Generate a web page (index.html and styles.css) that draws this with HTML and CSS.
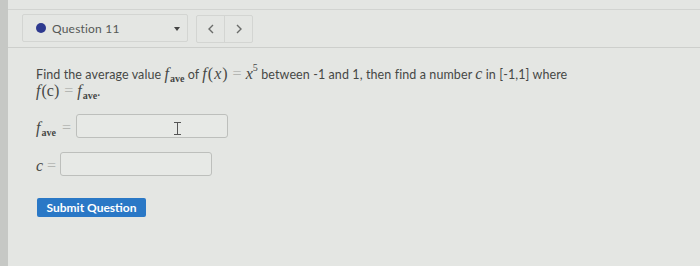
FILE: index.html
```html
<!DOCTYPE html>
<html>
<head>
<meta charset="utf-8">
<link rel="stylesheet" href="styles.css">
</head>
<body>
<div class="page">
  <div class="strip"></div>
  <div class="main">
    <div class="topbar">
      <div class="selector">
        <span class="dot"></span>
        <span class="qlabel">Question 11</span>
        <span class="caret"></span>
      </div>
      <div class="nav">
        <span class="navbtn"><svg width="8" height="10" viewBox="0 0 8 10"><path d="M6 1 L2 5 L6 9" fill="none" stroke="#6a6c6a" stroke-width="1.4"/></svg></span>
        <span class="navbtn"><svg width="8" height="10" viewBox="0 0 8 10"><path d="M2 1 L6 5 L2 9" fill="none" stroke="#6a6c6a" stroke-width="1.4"/></svg></span>
      </div>
    </div>
    <div class="content">
      <p class="question">Find the average value <span class="m">f</span><sub class="sub">ave</sub> of <span class="m">f</span><span class="mr">(</span><span class="m">x</span><span class="mr">)</span><span class="eq">=</span><span class="m">x</span><sup class="sup">5</sup> between -1 and 1, then find a number <span class="m">c</span> in [-1,1] where<br><span class="m">f</span><span class="mr">(c)</span><span class="eq">=</span><span class="m">f</span><sub class="sub">ave</sub>.</p>
      <div class="row row1">
        <span class="lbl"><span class="m">f</span><sub class="sub">ave</sub><span class="eq eqw">=</span></span>
        <div class="input"><span class="ibeam"></span></div>
      </div>
      <div class="row row2">
        <span class="lbl"><span class="m">c</span><span class="eq">=</span></span>
        <div class="input"></div>
      </div>
      <button class="submit">Submit Question</button>
    </div>
  </div>
</div>
</body>
</html>
```
FILE: styles.css
```css
html, body { margin: 0; padding: 0; }
body {
  background: #e4e6e3;
  font-family: Lato, "Open Sans", sans-serif;
  font-variant-ligatures: none;
  color: #464846;
  width: 700px;
  height: 266px;
  overflow: hidden;
}
.page { display: flex; height: 266px; }
.strip { width: 8px; background: #c6c8c5; flex: none; }
.main { flex: 1; }
.topbar {
  margin-top: 9px;
  height: 37px;
  border-top: 1px solid #d2d4d1;
  border-bottom: 1px solid #cdcfcc;
  display: flex;
  align-items: flex-start;
  padding-left: 14px;
}
.selector {
  margin-top: 4px;
  border: 1px solid #d3d5d2;
  border-radius: 2px;
  display: flex;
  align-items: center;
  position: relative;
  box-sizing: border-box;
  width: 166px;
  height: 28px;
}
.dot {
  width: 10px; height: 10px; border-radius: 50%;
  background: #2e3a8f;
  margin-left: 13px;
  margin-right: 6px;
}
.qlabel { font-size: 12px; color: #555856; letter-spacing: 0.2px; }
.caret {
  position: absolute;
  right: 7px; top: 12px;
  width: 0; height: 0;
  border-left: 3px solid transparent;
  border-right: 3px solid transparent;
  border-top: 4px solid #444;
}
.nav {
  margin-top: 5px;
  margin-left: 8px;
  display: flex;
  border: 1px solid #d3d5d2;
  border-radius: 2px;
  height: 28px;
  box-sizing: border-box;
}
.navbtn {
  width: 27px;
  display: flex; align-items: center; justify-content: center;
}
.navbtn + .navbtn { border-left: 1px solid #d3d5d2; }
.content { padding-left: 28px; }
.question {
  margin: 18px 0 0 0;
  font-size: 12.5px;
  line-height: 17px;
  letter-spacing: 0.1px;
}
.m { font-family: "Liberation Serif", "DejaVu Serif", serif; font-style: italic; font-size: 16px; line-height: 0; letter-spacing: 0; }
.mr { font-family: "Liberation Serif", "DejaVu Serif", serif; font-size: 16px; line-height: 0; letter-spacing: 0; padding: 0 1px; }
.sub { font-family: "Liberation Serif", serif; font-weight: bold; font-size: 10px; vertical-align: -3px; line-height: 0; letter-spacing: 0; margin-left: 1px; }
.sup { font-family: "Liberation Serif", serif; font-size: 10px; vertical-align: 8px; line-height: 0; }
.eq { color: #b4b6b3; font-family: "Liberation Serif", serif; font-size: 16px; line-height: 0; margin: 0 4px; }
.eqw { margin: 0 5px 0 6px; }
.row { display: flex; align-items: center; }
.row1 { margin-top: 14px; }
.row2 { margin-top: 14px; }
.lbl { white-space: nowrap; }
.input {
  width: 152px; height: 24px;
  border: 1px solid #bdbfbc;
  border-radius: 3px;
  background: #e7e9e6;
  box-sizing: border-box;
  position: relative;
}
.ibeam {
  position: absolute; left: 100px; top: 7px;
  width: 1px; height: 13px; background: #555;
}
.ibeam::before, .ibeam::after {
  content: ""; position: absolute; left: -3px; width: 7px; height: 1px; background: #555;
}
.ibeam::before { top: 0; }
.ibeam::after { bottom: 0; }
.submit {
  display: block;
  margin-top: 22px;
  margin-left: 1px;
  background: #2a78c6;
  color: #fff;
  border: none;
  border-radius: 2px;
  font-family: Lato, "Open Sans", sans-serif;
  font-weight: bold;
  font-size: 12px;
  padding: 0;
  height: 19px;
  width: 109px;
}
```
